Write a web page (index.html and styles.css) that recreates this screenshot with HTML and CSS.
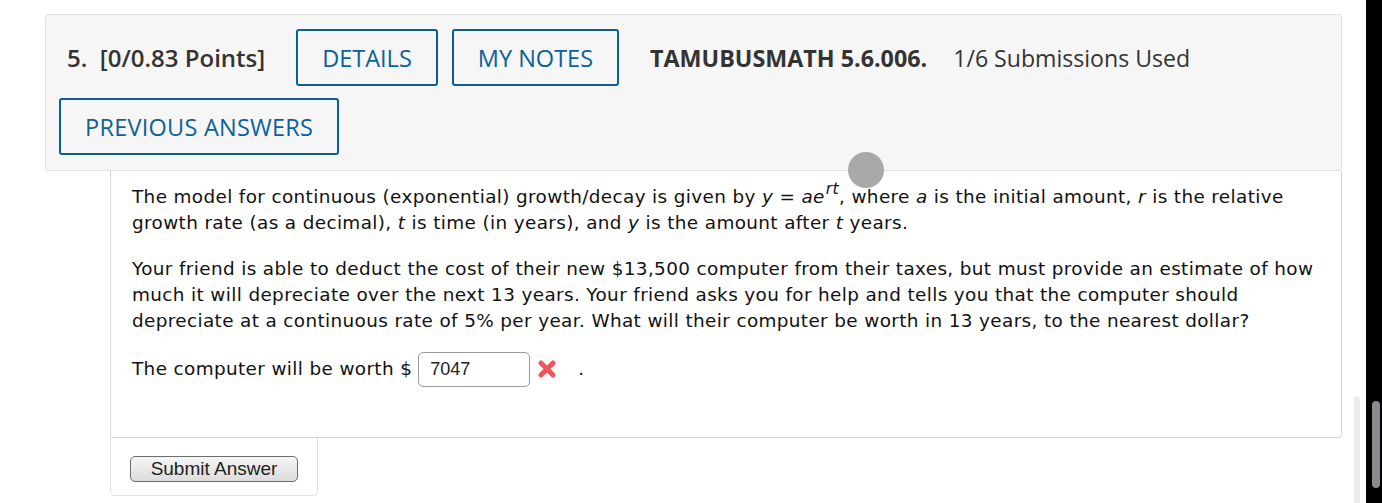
FILE: index.html
```html
<!DOCTYPE html>
<html>
<head>
<meta charset="utf-8">
<link rel="stylesheet" href="styles.css">
</head>
<body>
<div class="screen">
  <div class="page">
    <div class="question">
      <div class="qhead">
        <div class="row row-top">
          <span class="qnum">5.&nbsp; [0/0.83 Points]</span>
          <button class="hbtn btn-details">DETAILS</button>
          <button class="hbtn btn-notes">MY NOTES</button>
          <span class="qcode">TAMUBUSMATH 5.6.006.</span>
          <span class="qsubs">1/6 Submissions Used</span>
        </div>
        <div class="row row-bottom">
          <button class="hbtn btn-prev">PREVIOUS ANSWERS</button>
        </div>
      </div>
      <div class="qbody">
        <p class="para">The model for continuous (exponential) growth/decay is given by <i>y</i> = <i>ae</i><sup><i>rt</i></sup>, where <i>a</i> is the initial amount, <i>r</i> is the relative growth rate (as a decimal), <i>t</i> is time (in years), and <i>y</i> is the amount after <i>t</i> years.</p>
        <p class="para para-last">Your friend is able to deduct the cost of their new $13,500 computer from their taxes, but must provide an estimate of how much it will depreciate over the next 13 years. Your friend asks you for help and tells you that the computer should depreciate at a continuous rate of 5% per year. What will their computer be worth in 13 years, to the nearest dollar?</p>
        <p class="para answer-line">The computer will be worth $ <span class="answer-box">7047</span><svg class="wrong" width="20" height="20" viewBox="0 0 20 20"><path d="M4 4 L16 16 M16 4 L4 16" stroke="#f0555d" stroke-width="5" stroke-linecap="round"/></svg><span class="dot">.</span></p>
      </div>
      <div class="qfoot">
        <button class="submit">Submit Answer</button>
      </div>
    </div>
    <div class="touch"></div>
    <div class="track"></div>
  </div>
  <div class="scrollbar"><div class="thumb"></div></div>
</div>
</body>
</html>
```

FILE: styles.css
```css
html, body {
  margin: 0;
  padding: 0;
  background: #fff;
}
.screen {
  display: flex;
  width: 1382px;
  height: 503px;
  overflow: hidden;
}
.page {
  position: relative;
  flex: 1;
  padding: 14px 0 0 45px;
  box-sizing: border-box;
}
.scrollbar {
  width: 16px;
  background: #000;
  display: flex;
  flex-direction: column;
  align-items: center;
  padding-top: 401px;
  box-sizing: border-box;
}
.thumb {
  width: 8px;
  height: 87px;
  margin-left: 4px;
  border-radius: 4px;
  background: #8b8a91;
}
.track {
  position: absolute;
  left: 1354px;
  top: 396px;
  width: 6px;
  height: 120px;
  background: #ececec;
  border-radius: 3px 3px 0 0;
}
.touch {
  position: absolute;
  left: 848px;
  top: 152px;
  width: 36px;
  height: 36px;
  border-radius: 50%;
  background: #a9a9a9;
}
.question {
  width: 1297px;
}
.qhead {
  background: #f6f6f6;
  border: 1px solid #e2e2e2;
  border-radius: 3px;
  padding: 14px 0 15px 0;
  font-family: "Open Sans", sans-serif;
  color: #333;
}
.row {
  display: flex;
  align-items: center;
}
.row-top {
  padding-left: 21px;
}
.row-bottom {
  padding-left: 13px;
  margin-top: 12px;
}
.qnum {
  font-size: 24px;
  font-weight: 600;
  margin-right: 31px;
}
.hbtn {
  height: 57px;
  box-sizing: border-box;
  border: 2px solid #0b5f92;
  border-radius: 3px;
  background: transparent;
  color: #0b6199;
  font-family: "Open Sans", sans-serif;
  font-size: 23.5px;
  padding: 0 24px;
}
.btn-prev {
  letter-spacing: 0.25px;
}
.btn-details {
  margin-right: 14px;
}
.btn-notes {
  margin-right: 31px;
}
.qcode {
  font-size: 23.3px;
  font-weight: 700;
  margin-right: 26px;
}
.qsubs {
  font-size: 23.1px;
}
.qbody {
  margin-left: 65px;
  border-left: 1px solid #d8d8d8;
  border-right: 1px solid #d8d8d8;
  border-bottom: 1px solid #d4d4d4;
  border-bottom-right-radius: 4px;
  padding: 13px 20px 0 21px;
  height: 267px;
  box-sizing: border-box;
  font-family: "DejaVu Sans", Verdana, sans-serif;
  font-size: 18.4px;
  letter-spacing: 0.37px;
  line-height: 26px;
  color: #111;
}
.para {
  margin: 0 0 20px 0;
}
.para-last {
  margin-bottom: 17px;
}
.para sup {
  font-size: 15.5px;
  line-height: 0;
  vertical-align: 9px;
  margin-left: 1px;
}
.answer-line {
  display: flex;
  align-items: center;
  margin: 0;
  height: 36px;
}
.answer-box {
  display: inline-block;
  width: 112px;
  height: 35px;
  box-sizing: border-box;
  border: 1px solid #9a9a9a;
  border-radius: 5px;
  margin-left: 6px;
  padding-left: 11px;
  font-family: "Liberation Sans", Arial, sans-serif;
  font-size: 18px;
  letter-spacing: 0;
  line-height: 33px;
  color: #222;
}
.wrong {
  margin-left: 7px;
}
.dot {
  margin-left: 21px;
}
.qfoot {
  margin-left: 65px;
  width: 208px;
  box-sizing: border-box;
  border-left: 1px solid #e0e0e0;
  border-right: 1px solid #e0e0e0;
  border-bottom: 1px solid #e0e0e0;
  border-radius: 0 0 5px 5px;
  padding: 18px 0 13px 19px;
}
.submit {
  width: 168px;
  height: 26px;
  border: 1px solid #6e6e6e;
  border-radius: 5px;
  background: linear-gradient(#f6f6f6, #dcdcdc);
  font-family: "Liberation Sans", Arial, sans-serif;
  font-size: 19px;
  color: #222;
  padding: 0;
}
```
